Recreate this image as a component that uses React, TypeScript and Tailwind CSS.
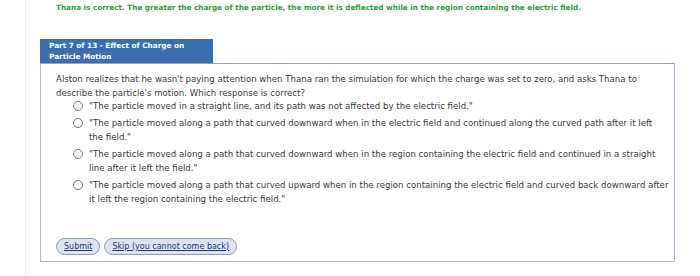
// Quiz part card — question with radio options and submit/skip buttons.

const options: string[][] = [
  ['"The particle moved in a straight line, and its path was not affected by the electric field."'],
  [
    '"The particle moved along a path that curved downward when in the electric field and continued along the curved path after it left',
    'the field."',
  ],
  [
    '"The particle moved along a path that curved downward when in the region containing the electric field and continued in a straight',
    'line after it left the field."',
  ],
  [
    '"The particle moved along a path that curved upward when in the region containing the electric field and curved back downward after',
    'it left the region containing the electric field."',
  ],
];

export default function App() {
  return (
    <div
      className="w-[700px] h-[276px] bg-white overflow-hidden"
      style={{ fontFamily: '"DejaVu Sans", Verdana, sans-serif' }}
    >
      <div className="ml-[25px] h-full border-l border-[#ececec] pl-[14px] pt-[3px]">
        {/* Feedback */}
        <p className="pl-[16px] text-[7.25px] leading-[10px] font-bold text-[#2e9e34] whitespace-nowrap">
          Thana is correct. The greater the charge of the particle, the more it is deflected while in the region
          containing the electric field.
        </p>

        {/* Tab */}
        <div className="mt-[26px] w-[173px] h-[24px] bg-[#3b6db1] px-[9px] pt-[2px] text-[7.3px] leading-[10.5px] font-bold text-white">
          Part 7 of 13 - Effect of Charge on
          <br />
          Particle Motion
        </div>

        {/* Body */}
        <div className="w-[635px] h-[199px] border border-[#a9bcd3] border-t-[#8fa6c4] pl-[15px] pt-[8px] text-[8.6px] leading-[14px] text-[#3a3a3a] whitespace-nowrap">
          <p>
            Alston realizes that he wasn't paying attention when Thana ran the simulation for which the charge was set
            to zero, and asks Thana to
            <br />
            describe the particle's motion. Which response is correct?
          </p>

          <div className="mt-[-1px] pl-[17px] flex flex-col gap-[3px]">
            {options.map((lines, i) => (
              <label key={i} className="flex items-start gap-[6px]">
                <span className="mt-[2px] w-[10px] h-[10px] shrink-0 rounded-full border border-[#767676] bg-white" />
                <span>
                  {lines.map((line, j) => (
                    <span key={j} className="block">
                      {line}
                    </span>
                  ))}
                </span>
              </label>
            ))}
          </div>

          <div className="mt-[32px] flex gap-[4px]">
            <button className="h-[17px] px-[7px] rounded-full border border-[#8d9bb0] bg-[#dbe4f0] text-[8px] text-[#223b6b] underline">
              Submit
            </button>
            <button className="h-[17px] px-[7px] rounded-full border border-[#8d9bb0] bg-[#dbe4f0] text-[8px] text-[#223b6b] underline">
              Skip (you cannot come back)
            </button>
          </div>
        </div>
      </div>
    </div>
  );
}
